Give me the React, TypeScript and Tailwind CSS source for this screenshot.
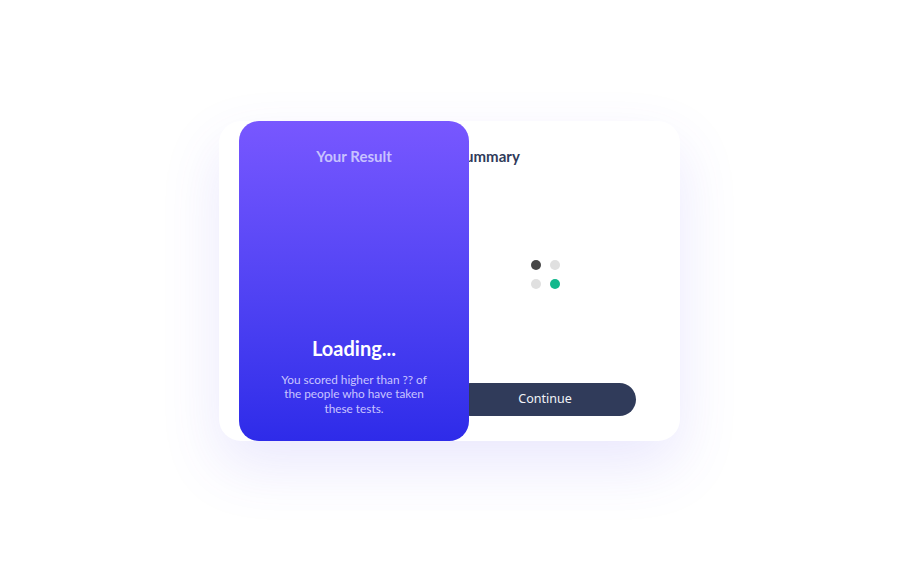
export default function App() {
  return (
    <div className="w-full h-[563px] bg-white flex items-center justify-center font-['Lato',sans-serif]">
      <div className="relative flex w-[461px] h-[320px] mb-[1px] mr-[1px] bg-white rounded-[22px] pl-[20px] shadow-[0_25px_60px_rgba(90,80,240,0.13)]">
        {/* Result card */}
        <div className="relative z-10 w-[230px] h-full rounded-[20px] bg-gradient-to-b from-[#7857ff] to-[#2e2be9] flex flex-col items-center pt-[25px] pb-[25px]">
          <h2 className="text-[15px] leading-[20px] font-bold text-[#c8c2ff]">Your Result</h2>
          <div className="flex-1" />
          <p className="text-[20px] leading-[24px] font-bold text-white">Loading...</p>
          <p className="mt-[13px] w-[150px] text-center text-[11.8px] leading-[14.5px] text-[#c9c5ff]">
            You scored higher than ?? of the people who have taken these tests.
          </p>
        </div>

        {/* Summary */}
        <div className="-ml-[15px] w-[182px] h-full flex flex-col pt-[25px] pb-[25px]">
          <h2 className="pl-[3px] text-[15px] leading-[20px] font-bold text-[#303b5a]">Summary</h2>
          <div className="flex-1 flex items-center justify-center">
            <div className="grid grid-cols-2 gap-[9px]">
              <span className="w-[10px] h-[10px] rounded-full bg-[#474747]" />
              <span className="w-[10px] h-[10px] rounded-full bg-[#e0e0e0]" />
              <span className="w-[10px] h-[10px] rounded-full bg-[#e0e0e0]" />
              <span className="w-[10px] h-[10px] rounded-full bg-[#12b88c]" />
            </div>
          </div>
          <button className="h-[33px] w-full rounded-full bg-[#303b5a] text-[#f2f3f7] text-[12.5px] font-['Noto_Sans',sans-serif]">
            Continue
          </button>
        </div>
      </div>
    </div>
  );
}
